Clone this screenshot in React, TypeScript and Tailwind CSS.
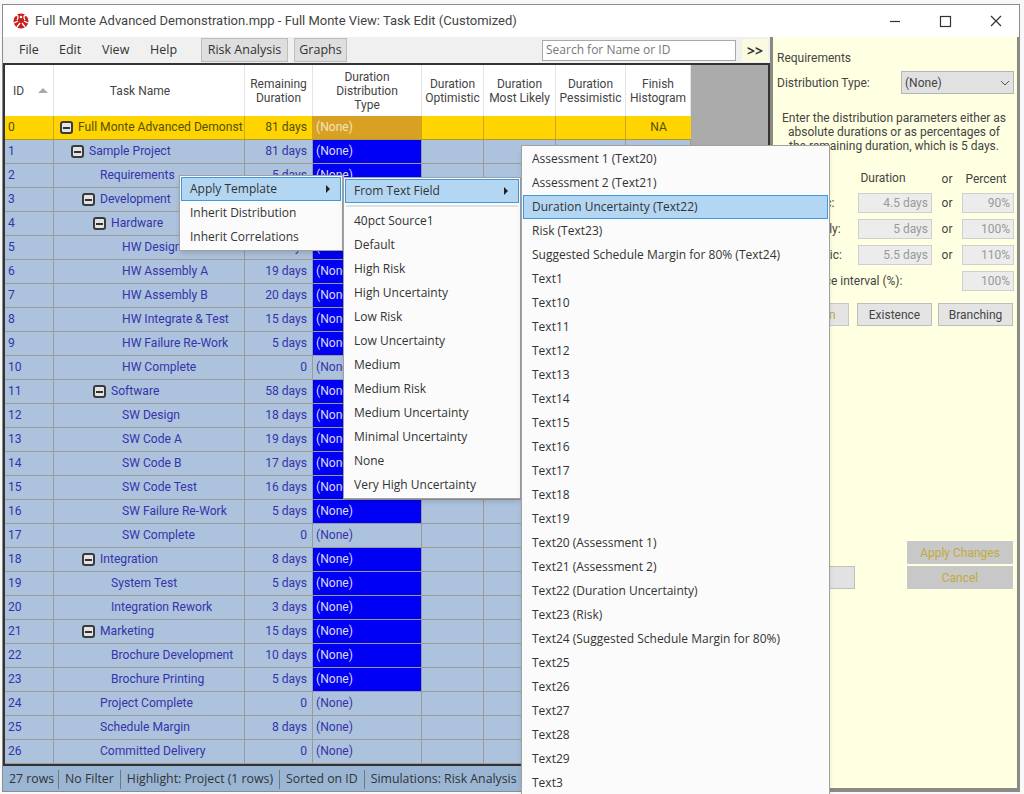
const menuFont = '[font-family:"Open_Sans","Noto_Sans",sans-serif]';
const uiFont = '[font-family:"Roboto","Noto_Sans",sans-serif]';

type Row = { id: number; name: string; level: number; dur: string; box?: boolean; blue?: boolean };

const rows: Row[] = [
  { id: 1, name: 'Sample Project', level: 1, dur: '81 days', box: true, blue: true },
  { id: 2, name: 'Requirements', level: 2, dur: '5 days', blue: true },
  { id: 3, name: 'Development', level: 2, dur: '58 days', box: true, blue: true },
  { id: 4, name: 'Hardware', level: 3, dur: '58 days', box: true, blue: true },
  { id: 5, name: 'HW Design', level: 4, dur: '20 days', blue: true },
  { id: 6, name: 'HW Assembly A', level: 4, dur: '19 days', blue: true },
  { id: 7, name: 'HW Assembly B', level: 4, dur: '20 days', blue: true },
  { id: 8, name: 'HW Integrate & Test', level: 4, dur: '15 days', blue: true },
  { id: 9, name: 'HW Failure Re-Work', level: 4, dur: '5 days', blue: true },
  { id: 10, name: 'HW Complete', level: 4, dur: '0' },
  { id: 11, name: 'Software', level: 3, dur: '58 days', box: true, blue: true },
  { id: 12, name: 'SW Design', level: 4, dur: '18 days', blue: true },
  { id: 13, name: 'SW Code A', level: 4, dur: '19 days', blue: true },
  { id: 14, name: 'SW Code B', level: 4, dur: '17 days', blue: true },
  { id: 15, name: 'SW Code Test', level: 4, dur: '16 days', blue: true },
  { id: 16, name: 'SW Failure Re-Work', level: 4, dur: '5 days', blue: true },
  { id: 17, name: 'SW Complete', level: 4, dur: '0' },
  { id: 18, name: 'Integration', level: 2, dur: '8 days', box: true, blue: true },
  { id: 19, name: 'System Test', level: 3, dur: '5 days', blue: true },
  { id: 20, name: 'Integration Rework', level: 3, dur: '3 days', blue: true },
  { id: 21, name: 'Marketing', level: 2, dur: '15 days', box: true, blue: true },
  { id: 22, name: 'Brochure Development', level: 3, dur: '10 days', blue: true },
  { id: 23, name: 'Brochure Printing', level: 3, dur: '5 days', blue: true },
  { id: 24, name: 'Project Complete', level: 2, dur: '0' },
  { id: 25, name: 'Schedule Margin', level: 2, dur: '8 days' },
  { id: 26, name: 'Committed Delivery', level: 2, dur: '0' },
];

const boxIndent = ['pl-[6px]', 'pl-[17px]', 'pl-[28px]', 'pl-[39px]', 'pl-[50px]'];
const leafIndent = ['pl-[24px]', 'pl-[35px]', 'pl-[46px]', 'pl-[57px]', 'pl-[68px]'];
const cols = 'grid w-[686px] grid-cols-[49px_191px_68px_109px_62px_72px_70px_65px]';

const templates = [
  '40pct Source1', 'Default', 'High Risk', 'High Uncertainty', 'Low Risk', 'Low Uncertainty', 'Medium',
  'Medium Risk', 'Medium Uncertainty', 'Minimal Uncertainty', 'None', 'Very High Uncertainty',
];

const fields = [
  'Assessment 1 (Text20)', 'Assessment 2 (Text21)', 'Duration Uncertainty (Text22)', 'Risk (Text23)',
  'Suggested Schedule Margin for 80% (Text24)', 'Text1', 'Text10', 'Text11', 'Text12', 'Text13', 'Text14',
  'Text15', 'Text16', 'Text17', 'Text18', 'Text19', 'Text20 (Assessment 1)', 'Text21 (Assessment 2)',
  'Text22 (Duration Uncertainty)', 'Text23 (Risk)', 'Text24 (Suggested Schedule Margin for 80%)', 'Text25',
  'Text26', 'Text27', 'Text28', 'Text29', 'Text3',
];

function Logo() {
  return (
    <svg width="18" height="18" viewBox="0 0 18 18">
      <circle cx="9" cy="9" r="7.5" fill="#c8201c" />
      <path d="M3 4 C6 2 7 5 5 8 M15 4 C12 2 11 5 13 8 M2 11 L6 9 M16 11 L12 9 M5 15 L8 11 M13 15 L10 11" stroke="#fff" strokeWidth="1.3" fill="none" />
      <circle cx="9" cy="5" r="1.2" fill="#fff" />
    </svg>
  );
}

function CollapseBox() {
  return (
    <span className="w-[13px] h-[13px] shrink-0 rounded-[3px] border-2 border-[#3a3a3a] bg-[#e4e4e4] flex items-center justify-center">
      <span className="w-[7px] h-[2px] bg-[#333]" />
    </span>
  );
}

function HeaderCell({ lines, extra = '' }: { lines: string[]; extra?: string }) {
  return (
    <div className={`border-r border-[#e4e4e4] flex flex-col items-center justify-center text-[12px] leading-[14px] text-[#444] text-center ${extra}`}>
      {lines.map((l) => (
        <span key={l}>{l}</span>
      ))}
    </div>
  );
}

function GridRow({ row }: { row: Row }) {
  const cell = 'border-r border-b border-[#9a9a9a] flex items-center';
  return (
    <div className={`${cols} h-[24px] shrink-0 bg-[#adc2dc] text-[12.1px] text-[#3434ac]`}>
      <div className={`${cell} pl-[3px]`}>{row.id}</div>
      <div className={`${cell} gap-[5px] whitespace-nowrap ${row.box ? boxIndent[row.level] : leafIndent[row.level]}`}>
        {row.box && <CollapseBox />}
        {row.name}
      </div>
      <div className={`${cell} justify-end pr-[5px]`}>{row.dur}</div>
      <div className={`${cell} pl-[3px] ${row.blue ? 'bg-[#0000f5] text-[#dcdcf0]' : ''}`}>(None)</div>
      <div className={cell} />
      <div className={cell} />
      <div className={cell} />
      <div className={cell} />
    </div>
  );
}

function MenuItem({ label, active, arrow }: { label: string; active?: boolean; arrow?: boolean }) {
  return (
    <div className={`h-[24px] flex items-center justify-between pl-[8px] pr-[10px] whitespace-nowrap border ${active ? 'bg-[#b3d7f3] border-[#3d9ae0]' : 'border-transparent'}`}>
      {label}
      {arrow && <span className="w-0 h-0 border-y-[4px] border-y-transparent border-l-[4px] border-l-[#222]" />}
    </div>
  );
}

function ParamRow({ label, dur, pct }: { label: string; dur?: string; pct: string }) {
  return (
    <div className="grid grid-cols-[81px_74px_30px_52px] items-center h-[26px]">
      <span className="whitespace-nowrap">{label}</span>
      {dur ? <div className="h-[20px] bg-[#ececec] border border-[#cfcfcf] text-[#999] text-right pr-[3px] leading-[18px]">{dur}</div> : <span />}
      {dur ? <span className="text-center">or</span> : <span />}
      <div className="h-[20px] bg-[#ececec] border border-[#cfcfcf] text-[#999] text-right pr-[3px] leading-[18px]">{pct}</div>
    </div>
  );
}

export default function App() {
  return (
    <div className={`w-[1024px] h-[794px] overflow-hidden bg-[#f8f8f8] relative pt-[4px] pl-[2px] ${uiFont}`}>
      <div className="w-[1018px] h-[788px] bg-white border border-[#8c8c8c] flex flex-col text-[12px] text-[#333]">
        {/* title bar */}
        <div className="h-[32px] shrink-0 flex items-center pl-[9px] gap-[5px] text-[13px] text-[#444]">
          <Logo />
          <span className="flex-1 whitespace-nowrap">Full Monte Advanced Demonstration.mpp - Full Monte View: Task Edit (Customized)</span>
          <svg width="150" height="20" viewBox="0 0 150 20" fill="none" stroke="#333" strokeWidth="1.2">
            <path d="M21 10.5 H31" />
            <rect x="71.5" y="5.5" width="10" height="10" />
            <path d="M122 5 L132 15 M132 5 L122 15" />
          </svg>
        </div>

        <div className="flex flex-1 min-h-0">
          <div className="w-[767px] shrink-0 flex flex-col">
            {/* toolbar */}
            <div className={`h-[26px] shrink-0 bg-[#f0f0f0] flex items-center pl-[16px] text-[12.5px] text-[#333] ${menuFont}`}>
              <span className="w-[40px]">File</span>
              <span className="w-[43px]">Edit</span>
              <span className="w-[48px]">View</span>
              <span className="w-[51px]">Help</span>
              <span className="w-[87px] h-[24px] bg-[#dedede] border border-[#bdbdbd] flex items-center justify-center">Risk Analysis</span>
              <span className="ml-[6px] w-[53px] h-[24px] bg-[#dedede] border border-[#bdbdbd] flex items-center justify-center">Graphs</span>
              <div className="ml-[195px] w-[194px] h-[21px] bg-white border border-[#a8a8a8] pl-[3px] leading-[18px] text-[12px] text-[#777]">Search for Name or ID</div>
              <span className="ml-[6px] w-[26px] h-[23px] bg-[#fafae0] text-[14px] font-bold flex items-center justify-center">&gt;&gt;</span>
            </div>

            {/* grid */}
            <div className="flex-1 min-h-0 border-2 border-[#333] bg-[#ababab] flex flex-col overflow-hidden">
              <div className={`${cols} h-[51px] shrink-0 bg-white`}>
                <div className="border-r border-[#e4e4e4] flex items-center pl-[8px] gap-[14px] text-[#444]">
                  ID
                  <span className="w-0 h-0 border-x-[5px] border-x-transparent border-b-[5px] border-b-[#aaa]" />
                </div>
                <HeaderCell lines={['Task Name']} extra="pr-[18px]" />
                <HeaderCell lines={['Remaining', 'Duration']} />
                <HeaderCell lines={['Duration', 'Distribution', 'Type']} />
                <HeaderCell lines={['Duration', 'Optimistic']} />
                <HeaderCell lines={['Duration', 'Most Likely']} />
                <HeaderCell lines={['Duration', 'Pessimistic']} />
                <HeaderCell lines={['Finish', 'Histogram']} />
              </div>
              <div className={`${cols} h-[24px] shrink-0 bg-[#ffd400] text-[12.1px] text-[#555000] border-b border-[#b09a30]`}>
                <div className="flex items-center pl-[3px] border-r border-[#c9a820]">0</div>
                <div className="flex items-center gap-[5px] pl-[6px] border-r border-[#c9a820] whitespace-nowrap overflow-hidden">
                  <CollapseBox />
                  Full Monte Advanced Demonst
                </div>
                <div className="flex items-center justify-end pr-[5px] border-r border-[#c9a820]">81 days</div>
                <div className="flex items-center pl-[3px] bg-[#d9a124] text-[#f0e4c0] border-r border-[#c9a820]">(None)</div>
                <div className="border-r border-[#c9a820]" />
                <div className="border-r border-[#c9a820]" />
                <div className="border-r border-[#c9a820]" />
                <div className="flex items-center justify-center">NA</div>
              </div>
              {rows.map((r) => (
                <GridRow key={r.id} row={r} />
              ))}
            </div>

            {/* status bar */}
            <div className={`h-[25px] shrink-0 bg-[#9ab6d4] flex items-center pl-[6px] pt-[2px] text-[12.3px] text-[#333] whitespace-nowrap ${menuFont}`}>
              <span className="pr-[4px] border-r border-[#777]">27 rows</span>
              <span className="px-[6px] border-r border-[#777]">No Filter</span>
              <span className="px-[6px] border-r border-[#777]">Highlight: Project (1 rows)</span>
              <span className="px-[6px] border-r border-[#777]">Sorted on ID</span>
              <span className="pl-[6px]">Simulations: Risk Analysis</span>
            </div>
          </div>

          {/* side panel */}
          <div className="flex-1 min-w-0 bg-[#ffffe1] border-l-[3px] border-b-[3px] border-r-2 border-[#8a8a80] pl-[4px] pr-[3px] text-[12px] text-[#444] flex flex-col">
            <div className="mt-[12px]">Requirements</div>
            <div className="mt-[4px] flex items-center justify-between h-[23px]">
              <span>Distribution Type:</span>
              <div className="w-[113px] h-[23px] bg-[#e1e1e1] border border-[#b5b5b5] flex items-center justify-between px-[3px]">
                (None)
                <svg width="10" height="6" viewBox="0 0 10 6" fill="none" stroke="#555"><path d="M1 1 L5 5 L9 1" /></svg>
              </div>
            </div>
            <p className="mt-[17px] pr-[3px] text-center leading-[14px]">
              Enter the distribution parameters either as
              <br />
              absolute durations or as percentages of
              <br />
              the remaining duration, which is 5 days.
            </p>
            <div className="mt-[15px] grid grid-cols-[81px_74px_30px_52px] text-center h-[22px] items-center">
              <span />
              <span className="pr-[24px] pb-[3px]">Duration</span>
              <span>or</span>
              <span className="pr-[4px]">Percent</span>
            </div>
            <ParamRow label="Optimistic:" dur="4.5 days" pct="90%" />
            <ParamRow label="Most Likely:" dur="5 days" pct="100%" />
            <ParamRow label="Pessimistic:" dur="5.5 days" pct="110%" />
            <ParamRow label="Confidence interval (%):" pct="100%" />
            <div className="mt-[9px] flex items-center h-[23px]">
              <span className="w-[72px] h-[23px] bg-[#e4e4e4] border border-[#c8c8c8] text-[#c2ab3c] flex items-center justify-center">Duration</span>
              <span className="ml-[8px] w-[75px] h-[23px] bg-[#e4e4e4] border border-[#bdbdbd] flex items-center justify-center">Existence</span>
              <span className="ml-[6px] w-[75px] h-[23px] bg-[#e4e4e4] border border-[#bdbdbd] flex items-center justify-center">Branching</span>
            </div>
            <div className="mt-[215px] pr-[1px] flex justify-end">
              <span className="w-[106px] h-[23px] bg-[#c8c8c8] text-[#c2ab3c] flex items-center justify-center">Apply Changes</span>
            </div>
            <div className="mt-[2px] pr-[1px] flex items-center justify-between">
              <span className="w-[78px] h-[23px] bg-[#e2e2e2] border border-[#c0c0c0]" />
              <span className="w-[106px] h-[23px] bg-[#c8c8c8] text-[#c2ab3c] flex items-center justify-center">Cancel</span>
            </div>
          </div>
        </div>
      </div>

      {/* context menus */}
      <div className={`absolute left-[179px] top-[175px] w-[164px] p-[1px] bg-[#fbfbfb] border border-[#a0a0a0] shadow-md text-[12px] text-[#333] ${menuFont}`}>
        <MenuItem label="Apply Template" active arrow />
        <MenuItem label="Inherit Distribution" />
        <MenuItem label="Inherit Correlations" />
      </div>
      <div className={`absolute left-[343px] top-[177px] w-[178px] p-[1px] bg-[#fbfbfb] border border-[#a0a0a0] shadow-md text-[12px] text-[#333] ${menuFont}`}>
        <MenuItem label="From Text Field" active arrow />
        <div className="h-[2px] my-[2px] mx-[1px] bg-[#e0e0e0]" />
        {templates.map((t) => (
          <MenuItem key={t} label={t} />
        ))}
      </div>
      <div className={`absolute left-[521px] top-[145px] w-[309px] p-[1px] bg-[#fbfbfb] border border-[#a0a0a0] shadow-md text-[12px] text-[#333] ${menuFont}`}>
        {fields.map((f, i) => (
          <MenuItem key={f} label={f} active={i === 2} />
        ))}
      </div>
    </div>
  );
}
